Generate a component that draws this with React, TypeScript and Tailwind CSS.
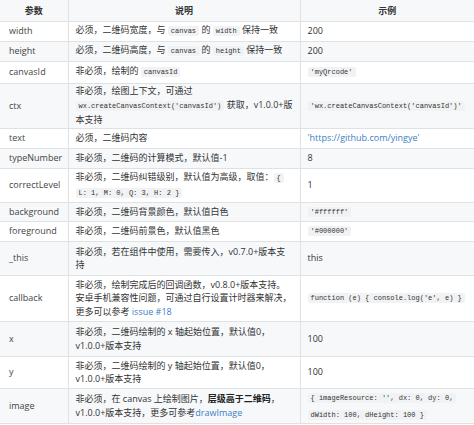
import React from "react";

const Code = ({ children }: { children: React.ReactNode }) => (
  <code className="rounded-[2px] bg-[#f1f2f3] px-[3px] py-[1px] font-['Liberation_Mono',monospace] text-[7px] text-[#333]">
    {children}
  </code>
);

const Link = ({ children }: { children: React.ReactNode }) => (
  <span className="text-[#3a7fc4]">{children}</span>
);

type Row = [string, React.ReactNode, React.ReactNode, string];

export default function App() {
  const rows: Row[] = [
    [
      "width",
      <>
        必须，二维码宽度，与 <Code>canvas</Code> 的 <Code>width</Code> 保持一致
      </>,
      "200",
      "h-[20px]",
    ],
    [
      "height",
      <>
        必须，二维码高度，与 <Code>canvas</Code> 的 <Code>height</Code> 保持一致
      </>,
      "200",
      "h-[20px]",
    ],
    [
      "canvasId",
      <>
        非必须，绘制的 <Code>canvasId</Code>
      </>,
      <Code>'myQrcode'</Code>,
      "h-[22px]",
    ],
    [
      "ctx",
      <>
        <span className="block whitespace-nowrap">非必须，绘图上下文，可通过</span>
        <span className="block whitespace-nowrap">
          <Code>wx.createCanvasContext('canvasId')</Code> 获取，v1.0.0+版
        </span>
        <span className="block whitespace-nowrap">本支持</span>
      </>,
      <Code>'wx.createCanvasContext('canvasId')'</Code>,
      "h-[45px]",
    ],
    ["text", "必须，二维码内容", <Link>'https://github.com/yingye'</Link>, "h-[20px]"],
    ["typeNumber", "非必须，二维码的计算模式，默认值-1", "8", "h-[20px]"],
    [
      "correctLevel",
      <>
        <span className="block whitespace-nowrap">
          非必须，二维码纠错级别，默认值为高级，取值：<Code>{"{"}</Code>
        </span>
        <span className="block whitespace-nowrap">
          <Code>L: 1, M: 0, Q: 3, H: 2 {"}"}</Code>
        </span>
      </>,
      "1",
      "h-[34px]",
    ],
    ["background", "非必须，二维码背景颜色，默认值白色", <Code>'#ffffff'</Code>, "h-[19px]"],
    ["foreground", "非必须，二维码前景色，默认值黑色", <Code>'#000000'</Code>, "h-[20px]"],
    [
      "_this",
      <>
        <span className="block whitespace-nowrap">非必须，若在组件中使用，需要传入，v0.7.0+版本支</span>
        <span className="block whitespace-nowrap">持</span>
      </>,
      "this",
      "h-[34px]",
    ],
    [
      "callback",
      <>
        <span className="block whitespace-nowrap">非必须，绘制完成后的回调函数，v0.8.0+版本支持。</span>
        <span className="block whitespace-nowrap">安卓手机兼容性问题，可通过自行设置计时器来解决，</span>
        <span className="block whitespace-nowrap">
          更多可以参考 <Link>issue #18</Link>
        </span>
      </>,
      <Code>function (e) {"{"} console.log('e', e) {"}"}</Code>,
      "h-[46px]",
    ],
    [
      "x",
      <>
        <span className="block whitespace-nowrap">非必须，二维码绘制的 x 轴起始位置，默认值0，</span>
        <span className="block whitespace-nowrap">v1.0.0+版本支持</span>
      </>,
      "100",
      "h-[35px]",
    ],
    [
      "y",
      <>
        <span className="block whitespace-nowrap">非必须，二维码绘制的 y 轴起始位置，默认值0，</span>
        <span className="block whitespace-nowrap">v1.0.0+版本支持</span>
      </>,
      "100",
      "h-[32px]",
    ],
    [
      "image",
      <>
        <span className="block whitespace-nowrap">
          非必须，在 canvas 上绘制图片，<b className="font-bold text-[#222]">层级高于二维码</b>，
        </span>
        <span className="block whitespace-nowrap">
          v1.0.0+版本支持，更多可参考<Link>drawImage</Link>
        </span>
      </>,
      <>
        <span className="block whitespace-nowrap leading-[16px]">
          <Code>{"{"} imageResource: '', dx: 0, dy: 0,</Code>
        </span>
        <span className="block whitespace-nowrap leading-[16px]">
          <Code>dWidth: 100, dHeight: 100 {"}"}</Code>
        </span>
      </>,
      "h-[33px]",
    ],
  ];

  return (
    <div className="h-[425px] w-[474px] overflow-hidden bg-white font-['Open_Sans','Noto_Sans_CJK_SC',sans-serif] text-[9px] leading-[13.5px] text-[#333]">
      <table className="w-[474px] table-fixed border-collapse">
        <colgroup>
          <col className="w-[68px]" />
          <col className="w-[232px]" />
          <col className="w-[174px]" />
        </colgroup>
        <thead>
          <tr className="h-[21px] bg-[#f6f8fa]">
            <th className="border-r border-b border-[#dfe2e5] text-center font-bold">参数</th>
            <th className="border-r border-b border-[#dfe2e5] text-center font-bold">说明</th>
            <th className="border-b border-[#dfe2e5] text-center font-bold">示例</th>
          </tr>
        </thead>
        <tbody>
          {rows.map(([name, desc, example, h], i) => (
            <tr key={name} className={`${h} ${i % 2 === 1 ? "bg-[#f6f8fa]" : "bg-white"}`}>
              <td className="border-r border-b border-[#dfe2e5] pl-[9px] align-middle text-[#444]">{name}</td>
              <td className="border-r border-b border-[#dfe2e5] pl-[7px] align-middle">{desc}</td>
              <td className="border-b border-[#dfe2e5] pl-[7px] align-middle">{example}</td>
            </tr>
          ))}
        </tbody>
      </table>
    </div>
  );
}
